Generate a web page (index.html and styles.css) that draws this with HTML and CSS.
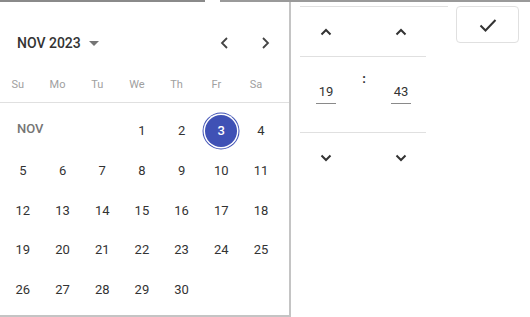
FILE: index.html
```html
<!DOCTYPE html>
<html lang="en">
<head>
    <meta charset="UTF-8">
    <meta name="viewport" content="width=device-width, initial-scale=1.0">
    <title>Date time picker</title>
    <link rel="stylesheet" href="styles.css">
</head>
<body>
    <div class="top-strip"></div>
    <div class="picker">
        <div class="calendar">
            <div class="cal-header">
                <button class="period-btn">NOV 2023
                    <svg class="caret" width="10" height="5" viewBox="0 0 10 5"><path d="M0 0L5 5L10 0Z" fill="#757575"/></svg>
                </button>
                <div class="nav">
                    <button class="nav-btn">
                        <svg width="16" height="16" viewBox="0 0 16 16"><path d="M10 3L5 8L10 13" fill="none" stroke="#444" stroke-width="1.8"/></svg>
                    </button>
                    <button class="nav-btn">
                        <svg width="16" height="16" viewBox="0 0 16 16"><path d="M6 3L11 8L6 13" fill="none" stroke="#444" stroke-width="1.8"/></svg>
                    </button>
                </div>
            </div>
            <div class="weekdays">
                <span>Su</span><span>Mo</span><span>Tu</span><span>We</span><span>Th</span><span>Fr</span><span>Sa</span>
            </div>
            <div class="days" id="days">
                <div class="month-label">NOV</div>
            </div>
        </div>

        <div class="time">
            <div class="time-grid">
                <button class="arrow"><svg width="12" height="8" viewBox="0 0 12 8"><path d="M1.5 6.5L6 2L10.5 6.5" fill="none" stroke="#333" stroke-width="2"/></svg></button>
                <span></span>
                <button class="arrow"><svg width="12" height="8" viewBox="0 0 12 8"><path d="M1.5 6.5L6 2L10.5 6.5" fill="none" stroke="#333" stroke-width="2"/></svg></button>

                <div class="field"><span class="value">19</span></div>
                <div class="colon">:</div>
                <div class="field"><span class="value">43</span></div>

                <button class="arrow"><svg width="12" height="8" viewBox="0 0 12 8"><path d="M1.5 1.5L6 6L10.5 1.5" fill="none" stroke="#333" stroke-width="2"/></svg></button>
                <span></span>
                <button class="arrow"><svg width="12" height="8" viewBox="0 0 12 8"><path d="M1.5 1.5L6 6L10.5 1.5" fill="none" stroke="#333" stroke-width="2"/></svg></button>
            </div>
        </div>

        <div class="actions">
            <button class="ok-btn">
                <svg width="20" height="16" viewBox="0 0 20 16"><path d="M2.5 8.5L7.5 13.5L17.5 3" fill="none" stroke="#333" stroke-width="2"/></svg>
            </button>
        </div>
    </div>

    <script>
        // November 2023 starts on a Wednesday; the month label fills the empty cells
        const daysEl = document.getElementById("days");
        const selected = 3;
        for (let d = 1; d <= 30; d++) {
            const cell = document.createElement("div");
            cell.className = "day";
            const inner = document.createElement("span");
            inner.className = d === selected ? "num selected" : "num";
            inner.textContent = d;
            cell.appendChild(inner);
            daysEl.appendChild(cell);
        }
    </script>
</body>
</html>
```

FILE: styles.css
```css
body {
    margin: 0;
    padding: 0;
    background: #fff;
    font-family: Roboto, "Liberation Sans", sans-serif;
    color: rgba(0, 0, 0, 0.87);
    overflow: hidden;
}
button {
    font-family: inherit;
    background: none;
    border: none;
    padding: 0;
    margin: 0;
    cursor: pointer;
}
.top-strip {
    height: 2px;
    background: linear-gradient(to right, #8a8a8a 0, #8a8a8a 205px, #fff 205px, #fff 220px, #9a9a9a 220px);
}
.picker {
    display: flex;
    align-items: flex-start;
}
.calendar {
    width: 289px;
    height: 313px;
    border-right: 2px solid #c4c4c4;
    border-bottom: 2px solid #c4c4c4;
}
.cal-header {
    display: flex;
    align-items: center;
    justify-content: space-between;
    height: 40px;
    margin-top: 21px;
    padding: 0 16px 0 17px;
}
.period-btn {
    display: flex;
    align-items: center;
    gap: 8px;
    font-size: 14px;
    font-weight: 500;
    color: #333;
}
.caret {
    margin-top: 1px;
}
.nav {
    display: flex;
    gap: 24px;
}
.nav-btn {
    width: 16px;
    height: 16px;
    display: flex;
}
.weekdays {
    display: grid;
    grid-template-columns: repeat(7, 39.7px);
    padding: 11px 0 6px 3px;
    border-bottom: 1px solid #e0e0e0;
}
.weekdays span {
    text-align: center;
    padding-right: 10px;
    font-size: 11px;
    line-height: 22px;
    color: #a0a0a0;
}
.days {
    display: grid;
    grid-template-columns: repeat(7, 39.7px);
    grid-auto-rows: 39.7px;
    padding: 8px 0 0 3px;
}
.month-label {
    grid-column: 1 / span 3;
    padding-left: 14px;
    font-size: 13px;
    font-weight: 500;
    color: #757575;
    line-height: 36px;
}
.day {
    display: flex;
    align-items: center;
    justify-content: center;
}
.num {
    display: flex;
    align-items: center;
    justify-content: center;
    width: 32px;
    height: 32px;
    border-radius: 50%;
    font-size: 13px;
    color: #333;
}
.num.selected {
    background: #3f51b5;
    color: #fff;
    font-weight: 500;
    box-shadow: 0 0 0 1.5px #fff, 0 0 0 2.5px #3f51b5;
}
.time {
    padding: 4px 0 0 9px;
}
.time-grid {
    display: grid;
    grid-template-columns: 52px 24px 50px;
    grid-template-rows: 49px 77px 50px;
    width: 148px;
    border-top: 1px solid #e0e0e0;
}
.time-grid > :nth-child(n+4):nth-child(-n+6) {
    border-top: 1px solid #e0e0e0;
    border-bottom: 1px solid #e0e0e0;
}
.arrow {
    display: flex;
    align-items: center;
    justify-content: center;
}
.field {
    display: flex;
    align-items: flex-start;
    justify-content: center;
    padding-top: 26px;
}
.value {
    width: 20px;
    text-align: center;
    font-size: 13px;
    color: #333;
    line-height: 18px;
    padding-bottom: 2px;
    border-bottom: 1px solid #8a8a8a;
}
.colon {
    display: flex;
    justify-content: center;
    padding-top: 14px;
    font-size: 13px;
    font-weight: 700;
    color: #333;
}
.actions {
    padding: 4px 0 0 8px;
}
.ok-btn {
    width: 63px;
    height: 37px;
    border: 1px solid #e0e0e0;
    border-radius: 4px;
    display: flex;
    align-items: center;
    justify-content: center;
}
```
